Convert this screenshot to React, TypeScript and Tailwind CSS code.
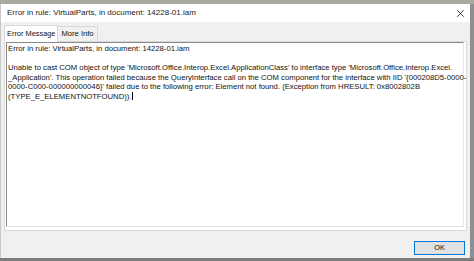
import React from "react";

const lines = [
  "Unable to cast COM object of type 'Microsoft.Office.Interop.Excel.ApplicationClass' to interface type 'Microsoft.Office.Interop.Excel.",
  "_Application'. This operation failed because the QueryInterface call on the COM component for the interface with IID '{000208D5-0000-",
  "0000-C000-000000000046}' failed due to the following error: Element not found. (Exception from HRESULT: 0x8002802B",
];

export default function App() {
  return (
    <div
      className="w-[474px] h-[261px] overflow-hidden bg-[#7d7d7d] flex flex-col"
      style={{ fontFamily: '"Liberation Sans", Arial, sans-serif' }}
    >
      <div className="h-[4px] bg-[#a9a9a4] shrink-0" />
      <div className="flex flex-1 min-h-0 pb-[3px]">
        <div className="w-[470px] flex flex-col bg-[#f0f0f0] border-l border-[#c8c8c8]">
          {/* Title bar */}
          <div className="h-[18px] bg-white flex items-center justify-between pl-[6px] pr-[6px] shrink-0">
            <span className="text-[8px] text-[#1a1a1a] leading-none whitespace-nowrap">
              Error in rule: VirtualParts, in document: 14228-01.iam
            </span>
            <svg width="7" height="7" viewBox="0 0 7 7">
              <path d="M0.3 0.3 L6.7 6.7 M6.7 0.3 L0.3 6.7" stroke="#222" strokeWidth="0.9" />
            </svg>
          </div>
          {/* Tabs */}
          <div className="flex items-end pl-[3px] pt-[2px] h-[19px] shrink-0">
            <div className="h-[17px] px-[2px] bg-white border border-b-0 border-[#d9d9d9] flex items-center text-[7.4px] text-[#111] relative z-10 -mb-[1px] whitespace-nowrap">
              Error Message
            </div>
            <div className="h-[15px] px-[3px] border border-b-0 border-l-0 border-[#d9d9d9] flex items-center text-[7.6px] text-[#111] whitespace-nowrap">
              More Info
            </div>
          </div>
          {/* Tab page */}
          <div className="mx-[3px] h-[190px] bg-white border border-[#d9d9d9] pl-[1px] pr-[2px] pb-[3px] flex flex-col">
            <div className="flex-1 border-t border-l border-[#8a8a8a] border-r border-b border-r-[#e6e6e6] border-b-[#e6e6e6] px-[1px] pt-[1px] text-[7.7px] leading-[9.5px] text-[#111] whitespace-nowrap">
              <div>Error in rule: VirtualParts, in document: 14228-01.iam</div>
              <div className="h-[9.5px]" />
              {lines.map((l, i) => (
                <div key={i}>{l}</div>
              ))}
              <div className="flex items-center">
                <span>(TYPE_E_ELEMENTNOTFOUND)).</span>
                <span className="inline-block w-[1px] h-[8px] bg-black ml-[1px]" />
              </div>
            </div>
          </div>
          {/* Bottom */}
          <div className="flex-1 flex justify-end items-start pt-[10px] pr-[5px]">
            <button className="w-[51px] h-[14px] bg-[#e1e1e1] border border-[#0078d7] text-[7.4px] text-[#111] flex items-center justify-center">
              OK
            </button>
          </div>
        </div>
        <div className="flex-1 bg-[#8e8e8e]" />
      </div>
    </div>
  );
}
